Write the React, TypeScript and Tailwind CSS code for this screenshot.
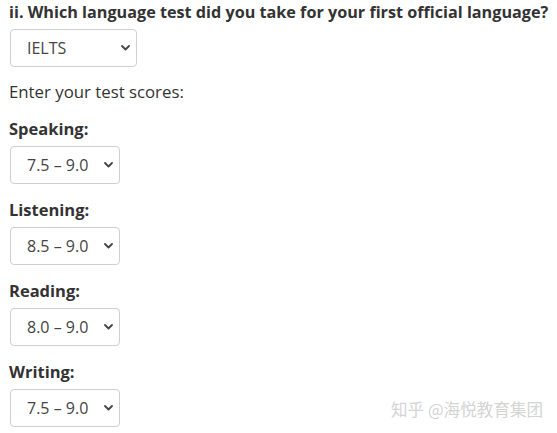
import React from "react";

const Field = ({ label, value }: { label: string; value: string }) => (
  <div className="flex flex-col">
    <div className="text-[16.5px] font-bold leading-[22px] text-[#333] pl-[9px]">{label}</div>
    <div className="mt-[6px] ml-[10px] w-[110px]">
      <div className="relative h-[38px] w-[110px] rounded-[4px] border border-[#cfcfcf] bg-white flex items-center pl-[16px] text-[16px] text-[#444]">
        <span>{value}</span>
        <svg width="9" height="6" viewBox="0 0 9 6" className="absolute right-[6px] top-1/2 -translate-y-1/2">
          <path d="M1 1 L4.5 4.5 L8 1" fill="none" stroke="#444" strokeWidth="1.8" strokeLinecap="round" strokeLinejoin="round" />
        </svg>
      </div>
    </div>
  </div>
);

export default function App() {
  return (
    <div
      className="relative w-[557px] h-[433px] bg-white overflow-hidden"
      style={{ fontFamily: '"Open Sans", "Noto Sans", sans-serif' }}
    >
      <div className="text-[16.2px] font-bold leading-[24px] text-[#333] pl-[9px] whitespace-nowrap">
        ii. Which language test did you take for your first official language?
      </div>
      <div className="mt-[5px] ml-[10px] w-[127px]">
        <div className="relative h-[38px] w-[127px] rounded-[4px] border border-[#cfcfcf] bg-white flex items-center pl-[16px] text-[16px] text-[#444]">
          <span>IELTS</span>
          <svg width="9" height="6" viewBox="0 0 9 6" className="absolute right-[6px] top-1/2 -translate-y-1/2">
            <path d="M1 1 L4.5 4.5 L8 1" fill="none" stroke="#444" strokeWidth="1.8" strokeLinecap="round" strokeLinejoin="round" />
          </svg>
        </div>
      </div>
      <div className="mt-[14px] pl-[9px] text-[16.8px] leading-[22px] text-[#333]">Enter your test scores:</div>
      <div className="mt-[15px] flex flex-col gap-[15px]">
        <Field label="Speaking:" value="7.5 – 9.0" />
        <Field label="Listening:" value="8.5 – 9.0" />
        <Field label="Reading:" value="8.0 – 9.0" />
        <Field label="Writing:" value="7.5 – 9.0" />
      </div>
      <div
        className="absolute left-[391px] top-[398px] text-[16.6px] leading-[22px] text-[#d4d4d4] whitespace-nowrap"
        style={{ fontFamily: '"Noto Sans CJK SC", "Noto Sans", sans-serif', textShadow: "0 0 1px #fff" }}
      >
        知乎 @海悦教育集团
      </div>
    </div>
  );
}
